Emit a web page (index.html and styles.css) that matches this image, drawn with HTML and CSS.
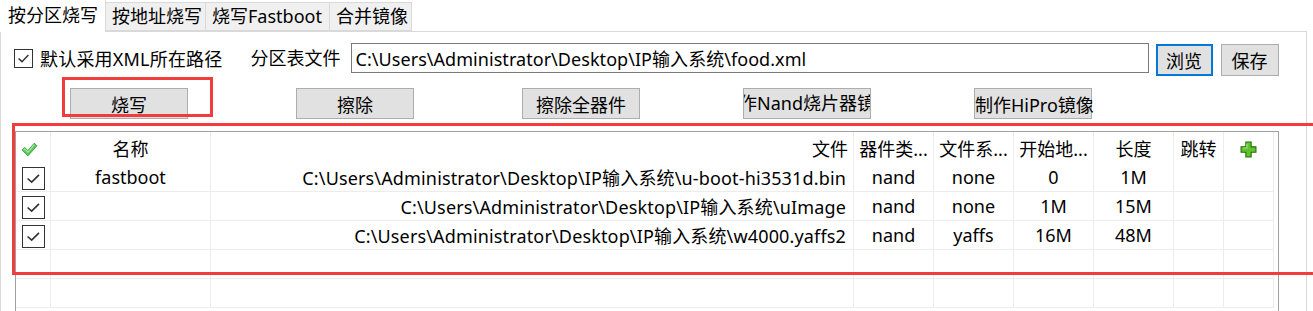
FILE: index.html
```html
<!DOCTYPE html>
<html lang="zh-CN">
<head>
    <meta charset="UTF-8">
    <title>分区烧写</title>
    <link rel="stylesheet" href="styles.css">
</head>
<body>
    <!-- Tabs -->
    <div class="tabs">
        <div class="tab active">按分区烧写</div>
        <div class="tab">按地址烧写</div>
        <div class="tab">烧写Fastboot</div>
        <div class="tab">合并镜像</div>
    </div>

    <div class="panel">
        <!-- File row -->
        <div class="file-row">
            <label class="check-label">
                <span class="box small">
                    <svg viewBox="0 0 19 19" width="17" height="17"><path d="M4 9.5 L7.8 13 L15 5.5" fill="none" stroke="#333" stroke-width="1.6"/></svg>
                </span>
                默认采用XML所在路径
            </label>
            <span class="file-label">分区表文件</span>
            <input class="path-input" type="text" value="C:\Users\Administrator\Desktop\IP输入系统\food.xml">
            <button class="btn browse">浏览</button>
            <button class="btn save">保存</button>
        </div>

        <!-- Action buttons -->
        <div class="actions">
            <button class="btn action">烧写</button>
            <button class="btn action">擦除</button>
            <button class="btn action">擦除全器件</button>
            <button class="btn action wide"><span>制作Nand烧片器镜像</span></button>
            <button class="btn action last">制作HiPro镜像</button>
        </div>

        <!-- Partition table -->
        <div class="grid">
            <table>
                <thead>
                    <tr>
                        <th class="c-check">
                            <svg viewBox="0 0 16 16" width="17" height="17">
                                <path d="M1 8.5 L3.5 6 L6.5 9 L12.5 2 L15 4.5 L6.5 14 Z" fill="#5cc85c" stroke="#3a9a3a" stroke-width="0.8"/>
                                <path d="M2.5 8.5 L3.5 7.5 L6.5 10.5 L12.5 3.5" fill="none" stroke="#a6ec9e" stroke-width="1"/>
                            </svg>
                        </th>
                        <th class="c-name">名称</th>
                        <th class="c-file">文件</th>
                        <th class="c-mid">器件类...</th>
                        <th class="c-mid">文件系...</th>
                        <th class="c-mid">开始地...</th>
                        <th class="c-mid">长度</th>
                        <th class="c-sm">跳转</th>
                        <th class="c-sm">
                            <svg viewBox="0 0 16 16" width="17" height="17">
                                <path d="M5.5 1 H10.5 V5.5 H15 V10.5 H10.5 V15 H5.5 V10.5 H1 V5.5 H5.5 Z" fill="#62c22a" stroke="#1d6e10" stroke-width="1"/>
                                <path d="M6.5 2.5 V6.5 H2.5" fill="none" stroke="#aee68a" stroke-width="1"/>
                            </svg>
                        </th>
                    </tr>
                </thead>
                <tbody>
                    <tr>
                        <td class="c-check"><span class="box"><svg viewBox="0 0 23 23" width="21" height="21"><path d="M5 11.5 L9.5 15.5 L17.5 7.5" fill="none" stroke="#333" stroke-width="1.8"/></svg></span></td>
                        <td>fastboot</td>
                        <td class="path">C:\Users\Administrator\Desktop\IP输入系统\u-boot-hi3531d.bin</td>
                        <td>nand</td>
                        <td>none</td>
                        <td>0</td>
                        <td>1M</td>
                        <td></td>
                        <td></td>
                    </tr>
                    <tr>
                        <td class="c-check"><span class="box"><svg viewBox="0 0 23 23" width="21" height="21"><path d="M5 11.5 L9.5 15.5 L17.5 7.5" fill="none" stroke="#333" stroke-width="1.8"/></svg></span></td>
                        <td></td>
                        <td class="path">C:\Users\Administrator\Desktop\IP输入系统\uImage</td>
                        <td>nand</td>
                        <td>none</td>
                        <td>1M</td>
                        <td>15M</td>
                        <td></td>
                        <td></td>
                    </tr>
                    <tr>
                        <td class="c-check"><span class="box"><svg viewBox="0 0 23 23" width="21" height="21"><path d="M5 11.5 L9.5 15.5 L17.5 7.5" fill="none" stroke="#333" stroke-width="1.8"/></svg></span></td>
                        <td></td>
                        <td class="path">C:\Users\Administrator\Desktop\IP输入系统\w4000.yaffs2</td>
                        <td>nand</td>
                        <td>yaffs</td>
                        <td>16M</td>
                        <td>48M</td>
                        <td></td>
                        <td></td>
                    </tr>
                    <tr><td></td><td></td><td></td><td></td><td></td><td></td><td></td><td></td><td></td></tr>
                    <tr><td></td><td></td><td></td><td></td><td></td><td></td><td></td><td></td><td></td></tr>
                </tbody>
            </table>
        </div>
    </div>

    <!-- Red annotation boxes -->
    <div class="mark mark-burn"></div>
    <div class="mark mark-table"></div>
</body>
</html>
```

FILE: styles.css
```css
body {
    margin: 0;
    background: #fff;
    font-family: "Noto Sans", "Noto Sans CJK SC", sans-serif;
    font-size: 18px;
    color: #000;
    position: relative;
    height: 311px;
    overflow: hidden;
}
.tabs {
    display: flex;
    height: 31px;
    align-items: flex-end;
}
.tab {
    height: 29px;
    line-height: 27px;
    padding: 0 6px;
    background: #f0f0f0;
    border-top: 1px solid #d9d9d9;
    border-right: 1px solid #d9d9d9;
    border-bottom: 1px solid #d9d9d9;
    box-sizing: border-box;
    white-space: nowrap;
}
.tab.active {
    height: 32px;
    line-height: 30px;
    width: 106px;
    padding-left: 8px;
    background: #fff;
    border-top: none;
    border-bottom: none;
    margin-bottom: -1px;
    position: relative;
    z-index: 1;
}
.tab:nth-child(2) { width: 100px; }
.tab:nth-child(3) { width: 124px; }
.tab:nth-child(4) { width: 82px; }
.panel {
    width: 1307px;
    height: 280px;
    box-sizing: border-box;
    border: 1px solid #d9d9d9;
    border-bottom: none;
    padding-top: 11px;
}
.file-row {
    display: flex;
    align-items: flex-start;
    padding-left: 13px;
}
.check-label {
    display: flex;
    align-items: center;
    height: 30px;
    white-space: nowrap;
    letter-spacing: 0.2px;
}
.box {
    display: inline-flex;
    align-items: center;
    justify-content: center;
    width: 23px;
    height: 23px;
    border: 1px solid #333;
    box-sizing: border-box;
    background: #fff;
}
.box.small {
    width: 19px;
    height: 19px;
    margin-right: 7px;
}
.file-label {
    margin-left: 28px;
    line-height: 30px;
}
.path-input {
    margin-left: 10px;
    width: 798px;
    height: 30px;
    box-sizing: border-box;
    border: 1px solid #7a7a7a;
    padding: 0 4px;
    font: inherit;
    color: #000;
    letter-spacing: 0.05px;
}
.btn {
    font: inherit;
    color: #000;
    background: #e1e1e1;
    border: 1px solid #adadad;
    box-sizing: border-box;
    padding: 0;
    height: 32px;
}
.browse {
    margin-left: 7px;
    margin-top: 1px;
    width: 57px;
    border: 2px solid #0078d7;
}
.save {
    margin-left: 8px;
    margin-top: 1px;
    width: 58px;
}
.actions {
    display: grid;
    grid-template-columns: 226px 226px 221px 231px auto;
    justify-items: start;
    padding-left: 69px;
    margin-top: 12px;
}
.action {
    width: 118px;
    height: 31px;
    white-space: nowrap;
    overflow: hidden;
}
.action.last {
    overflow: visible;
}
.action.wide {
    width: 128px;
    display: flex;
    justify-content: center;
}
.action.wide span {
    flex-shrink: 0;
}
.grid {
    margin-top: 12px;
    margin-left: 14px;
    width: 1264px;
    height: 180px;
    box-sizing: border-box;
    border: 1px solid #a0a0a0;
    border-bottom: none;
    overflow: hidden;
}
table {
    border-collapse: separate;
    border-spacing: 0;
    table-layout: fixed;
    width: 1258px;
}
th, td {
    box-sizing: border-box;
    border-right: 1px solid #ececec;
    padding: 0;
    text-align: center;
    white-space: nowrap;
    overflow: hidden;
    font-weight: normal;
}
th {
    height: 31px;
}
td {
    height: 29px;
    border-bottom: 1px solid #ececec;
}
th svg {
    vertical-align: middle;
}
.c-check { width: 35px; text-align: left; padding-left: 6px; }
th.c-check { padding-left: 5px; }
td.c-check .box { vertical-align: middle; }
.c-name { width: 160px; }
.c-file { width: 643px; text-align: right; padding-right: 5px; }
.c-mid { width: 80px; }
.c-sm { width: 50px; }
.path {
    text-align: right;
    padding-right: 7px;
    letter-spacing: 0.15px;
}
.mark {
    position: absolute;
    border: 3px solid #f23b3b;
    box-sizing: border-box;
    pointer-events: none;
    z-index: 2;
}
.mark-burn {
    left: 62px;
    top: 77px;
    width: 151px;
    height: 40px;
}
.mark-table {
    left: 12px;
    top: 123px;
    width: 1330px;
    height: 152px;
}
```
